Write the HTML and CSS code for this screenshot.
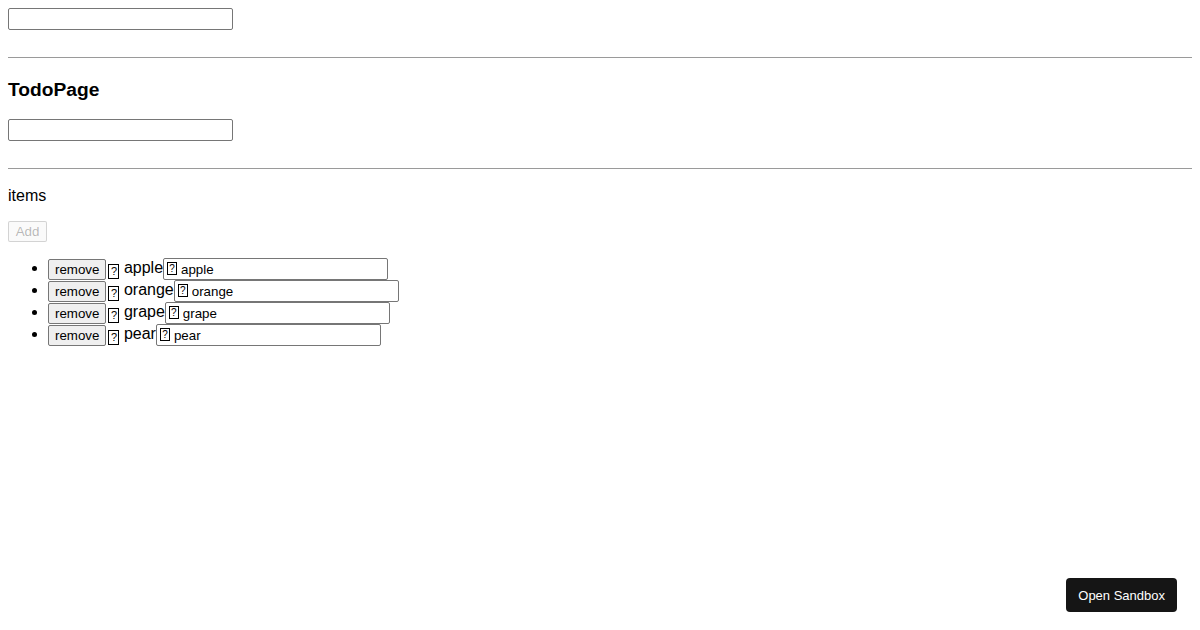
FILE: index.html
```html
<!DOCTYPE html>
<html>
<head>
<meta charset="utf-8">
<link rel="stylesheet" href="styles.css">
</head>
<body>
<div class="field-row"><input class="text-input" type="text"></div>
<hr class="rule">
<h3 class="page-title">TodoPage</h3>
<div class="field-row"><input class="text-input" type="text"></div>
<hr class="rule">
<p class="label">items</p>
<div class="add-row"><button class="btn" disabled>Add</button></div>
<ul class="todo-list">
  <li><button class="btn">remove</button><span class="tofu">?</span> apple<span class="edit-wrap"><input class="text-input item-input" type="text" value="apple"><span class="tofu tofu-small">?</span></span></li>
  <li><button class="btn">remove</button><span class="tofu">?</span> orange<span class="edit-wrap"><input class="text-input item-input" type="text" value="orange"><span class="tofu tofu-small">?</span></span></li>
  <li><button class="btn">remove</button><span class="tofu">?</span> grape<span class="edit-wrap"><input class="text-input item-input" type="text" value="grape"><span class="tofu tofu-small">?</span></span></li>
  <li><button class="btn">remove</button><span class="tofu">?</span> pear<span class="edit-wrap"><input class="text-input item-input" type="text" value="pear"><span class="tofu tofu-small">?</span></span></li>
</ul>
<button class="sandbox-btn">Open Sandbox</button>
</body>
</html>
```
FILE: styles.css
```css
html, body {
  background: #ffffff;
}
body {
  margin: 8px;
  font-family: "Liberation Sans", Arial, sans-serif;
  font-size: 16px;
  color: #000;
}
.field-row {
  height: 41px;
}
.text-input {
  box-sizing: border-box;
  width: 225px;
  height: 22px;
  padding: 1px 2px;
  border: 1px solid #767676;
  border-radius: 2px;
  font-family: "Liberation Sans", Arial, sans-serif;
  font-size: 13.333px;
  color: #000;
  background: #fff;
  vertical-align: middle;
}
.rule {
  margin: 8px 0;
  border: none;
  border-top: 1px solid #9a9a9a;
  height: 0;
}
.page-title {
  font-size: 19.2px;
  font-weight: bold;
  margin: 20.72px 0 18.72px;
}
.label {
  margin: 18px 0 16px;
}
.add-row {
  height: 21px;
  margin-top: 16px;
}
.btn {
  box-sizing: border-box;
  height: 21px;
  padding: 1px 6px;
  border: 1px solid #767676;
  border-radius: 2px;
  background: #efefef;
  font-family: "Liberation Sans", Arial, sans-serif;
  font-size: 13.333px;
  color: #000;
  vertical-align: middle;
}
.btn:disabled {
  width: 39px;
  border-color: rgba(118,118,118,0.3);
  background: rgba(239,239,239,0.3);
  color: rgba(16,16,16,0.3);
}
.todo-list {
  margin: 15px 0 16px;
  padding-left: 40px;
}
.todo-list li {
  height: 22px;
  line-height: 22px;
}
.tofu {
  display: inline-block;
  box-sizing: border-box;
  width: 11px;
  height: 15px;
  border: 1px solid #000;
  font-size: 11px;
  line-height: 13px;
  text-align: center;
  vertical-align: -2px;
  margin-left: 2px;
}
.edit-wrap {
  position: relative;
  display: inline-block;
  vertical-align: middle;
  line-height: 0;
}
.item-input {
  padding-left: 17px;
}
.tofu-small {
  position: absolute;
  left: 4px;
  top: 4px;
  width: 10px;
  height: 13px;
  margin: 0;
  font-size: 10px;
  line-height: 11px;
}
.sandbox-btn {
  position: fixed;
  right: 23px;
  bottom: 18px;
  height: 34px;
  padding: 0 12px;
  border: none;
  border-radius: 4px;
  background: #151515;
  color: #fff;
  font-family: "Liberation Sans", Arial, sans-serif;
  font-size: 13px;
}
```
